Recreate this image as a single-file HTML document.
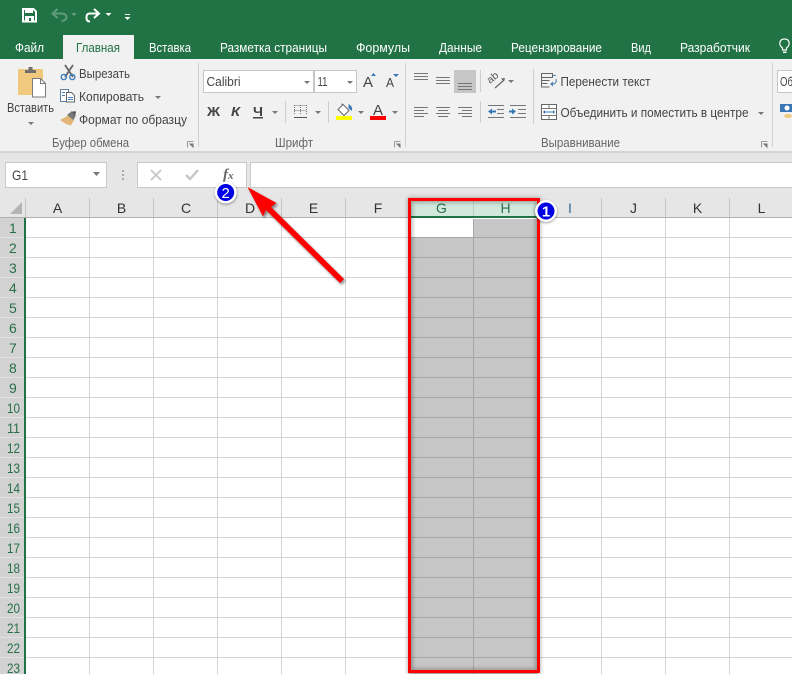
<!DOCTYPE html>
<html><head><meta charset="utf-8"><style>
html,body{margin:0;padding:0;background:#fff;overflow:hidden}
svg{display:block}
text{font-family:"Liberation Sans",sans-serif;font-size:12.5px;fill:#444}
.t{fill:#fff}
.g{fill:#666}
.c{font-size:14px;fill:#333;text-anchor:middle}
.r{font-size:14px;fill:#27704a}
.l{fill:none;stroke:#767676}
</style></head><body>
<svg width="792" height="674" viewBox="0 0 792 674" xmlns="http://www.w3.org/2000/svg">
<defs>
<filter id="b" x="-20%" y="-20%" width="140%" height="140%"><feGaussianBlur stdDeviation="2"/></filter>
<filter id="b2" x="-30%" y="-30%" width="160%" height="160%"><feGaussianBlur stdDeviation="1.2"/></filter>
</defs>

<!-- title bar -->
<rect width="792" height="59" fill="#217346"/>
<rect x="63" y="35" width="71" height="24" fill="#f1f1f1"/>
<!-- save -->
<path d="M23 9h10.500l2.500 2.500v10h-13z" fill="none" stroke="#fff" stroke-width="2"/>
<rect x="25" y="8" width="8" height="5" fill="#fff"/>
<rect x="25" y="16" width="9" height="5" fill="#fff"/>
<rect x="29" y="18" width="2" height="3" fill="#217346"/>
<!-- undo -->
<path d="M53 13.500h9c3.500 0 4.500 2.500 4.500 4s-2 3.500-5 3.500" fill="none" stroke="#5f9c7c" stroke-width="2"/>
<path d="M57.500 9l-5 4.500 5 4.500" fill="none" stroke="#5f9c7c" stroke-width="2"/>
<path d="M71 13h6l-3 3z" fill="#5f9c7c"/>
<!-- redo -->
<path d="M98 13.500h-8c-3.500 0-3.500 2.500-3.500 4.500s1 3.500 3.500 3.500" fill="none" stroke="#fff" stroke-width="2"/>
<path d="M94 9l5 4.500-5 4.500" fill="none" stroke="#fff" stroke-width="2"/>
<path d="M105.500 13h6l-3 3z" fill="#fff"/>
<rect x="125" y="14" width="5" height="1" fill="#fff"/>
<path d="M124.500 17h6l-3 3z" fill="#fff"/>

<!-- tabs -->
<text class="t" x="15" y="52" textLength="29" lengthAdjust="spacingAndGlyphs">Файл</text>
<text x="76" y="52" textLength="44" lengthAdjust="spacingAndGlyphs" style="fill:#217346">Главная</text>
<text class="t" x="149" y="52" textLength="42" lengthAdjust="spacingAndGlyphs">Вставка</text>
<text class="t" x="220" y="52" textLength="107" lengthAdjust="spacingAndGlyphs">Разметка страницы</text>
<text class="t" x="356" y="52" textLength="54" lengthAdjust="spacingAndGlyphs">Формулы</text>
<text class="t" x="439" y="52" textLength="43" lengthAdjust="spacingAndGlyphs">Данные</text>
<text class="t" x="511" y="52" textLength="91" lengthAdjust="spacingAndGlyphs">Рецензирование</text>
<text class="t" x="631" y="52" textLength="20" lengthAdjust="spacingAndGlyphs">Вид</text>
<text class="t" x="680" y="52" textLength="70" lengthAdjust="spacingAndGlyphs">Разработчик</text>
<path d="M782.500 50v-2c-4.500-3.500-3-9 2-9s6.500 5.500 2 9v2z" fill="none" stroke="#fff" stroke-width="1.200"/>
<rect x="783" y="51.500" width="3.500" height="1.500" fill="#fff"/>

<!-- ribbon -->
<rect y="59" width="792" height="92" fill="#f1f1f1"/>
<rect y="151" width="792" height="2" fill="#d4d4d4"/>
<rect x="198" y="63" width="1" height="84" fill="#d0d0d0"/>
<rect x="405" y="63" width="1" height="84" fill="#d0d0d0"/>
<rect x="772" y="63" width="1" height="84" fill="#d0d0d0"/>

<!-- paste -->
<rect x="18" y="69" width="25" height="26" rx="1" fill="#f0c97f"/>
<path d="M25 73v-3h3.500v-3h4v3h3.500v3z" fill="#6f6f6f"/>
<path d="M32.500 78.500h8l5 5v13.500h-13z" fill="#fff" stroke="#7a7a7a"/>
<path d="M40.500 78.500v5h5" fill="none" stroke="#7a7a7a"/>
<text x="7" y="112" textLength="47" lengthAdjust="spacingAndGlyphs">Вставить</text>
<path d="M28 122h6l-3 3z" fill="#777"/>
<!-- scissors -->
<path d="M65 65l8 12M73 65l-8 12" stroke="#666" stroke-width="1.800" fill="none"/>
<circle cx="63.800" cy="77" r="2.600" fill="none" stroke="#3f7fbf" stroke-width="1.400"/>
<circle cx="72.300" cy="77" r="2.600" fill="none" stroke="#3f7fbf" stroke-width="1.400"/>
<text x="79" y="78" textLength="51" lengthAdjust="spacingAndGlyphs">Вырезать</text>
<!-- copy -->
<path d="M60.500 89.500h8v12h-8z" fill="#fff" stroke="#5f7f9f"/>
<path d="M66.500 92.500h5l3 3v6.500h-8z" fill="#fff" stroke="#666"/>
<path d="M62 92.500h3M62 95.500h3M68 97.500h5M68 99.500h5" stroke="#4a7fb5" fill="none"/>
<text x="79" y="101" textLength="65" lengthAdjust="spacingAndGlyphs">Копировать</text>
<path d="M155 96h6l-3 3z" fill="#777"/>
<!-- brush -->
<path d="M60 120l9-5 5 5-3 5.500-5-1.500z" fill="#e2b478"/>
<path d="M67 115l5-4 4 4-2.500 5z" fill="#777"/>
<path d="M72 112l3-1 1 1-1 3z" fill="#555"/>
<text x="79" y="124" textLength="108" lengthAdjust="spacingAndGlyphs">Формат по образцу</text>
<text class="g" x="52" y="147" textLength="77" lengthAdjust="spacingAndGlyphs">Буфер обмена</text>
<path d="M187.500 141.500h6M187.500 141.500v6" stroke="#999" fill="none"/><path d="M190 144l3 3v-3z" fill="#777" stroke="#777"/>

<!-- font -->
<rect x="203.500" y="70.500" width="110" height="22" fill="#fff" stroke="#c6c6c6"/>
<rect x="314.500" y="70.500" width="42" height="22" fill="#fff" stroke="#c6c6c6"/>
<text x="206.500" y="86" textLength="34" lengthAdjust="spacingAndGlyphs">Calibri</text>
<text x="317.500" y="86" textLength="10" lengthAdjust="spacingAndGlyphs">11</text>
<path d="M304 81h6l-3 3zM347 81h6l-3 3z" fill="#777"/>
<text x="363" y="87" style="font-size:15px" textLength="10" lengthAdjust="spacingAndGlyphs">A</text>
<path d="M371 76l2.500-3 2.500 3z" fill="#3a76b5"/>
<text x="386" y="87" style="font-size:13px" textLength="8" lengthAdjust="spacingAndGlyphs">A</text>
<path d="M393 74h6l-3 3z" fill="#3a76b5"/>
<text x="207" y="116" style="font-weight:bold;font-size:13px" textLength="13" lengthAdjust="spacingAndGlyphs">Ж</text>
<text x="231" y="116" style="font-weight:bold;font-style:italic;font-size:13px" textLength="9" lengthAdjust="spacingAndGlyphs">К</text>
<text x="253" y="116" style="font-weight:bold;font-size:13px" textLength="10" lengthAdjust="spacingAndGlyphs">Ч</text>
<rect x="253" y="117" width="10" height="1.500" fill="#444"/>
<path d="M272 111h6l-3 3z" fill="#777"/>
<rect x="285" y="101" width="1" height="22" fill="#cdcdcd"/>
<path d="M294.500 105.500h12M294.500 110.500h12M294.500 105v10M300.500 105v10M306.500 105v10" stroke="#777" stroke-dasharray="1 1" fill="none"/>
<rect x="294" y="117" width="13" height="1" fill="#555"/>
<path d="M315 111h6l-3 3z" fill="#777"/>
<rect x="328" y="101" width="1" height="22" fill="#cdcdcd"/>
<path d="M338 109.500l5-5 6 6-5 5z" fill="#fff" stroke="#666"/>
<path d="M342 105v-1.500M349 105c2 1 3 3 2.500 5l-2.500-2z" fill="#3a76b5" stroke="#3a76b5"/>
<rect x="336" y="116" width="16" height="4" fill="#ffff00"/>
<path d="M358 111h6l-3 3z" fill="#777"/>
<text x="373" y="115" style="font-size:15px" textLength="10" lengthAdjust="spacingAndGlyphs">A</text>
<rect x="370" y="116" width="16" height="4" fill="#ff0000"/>
<path d="M392 111h6l-3 3z" fill="#777"/>
<text class="g" x="275" y="147" textLength="38" lengthAdjust="spacingAndGlyphs">Шрифт</text>
<path d="M394.500 141.500h6M394.500 141.500v6" stroke="#999" fill="none"/><path d="M397 144l3 3v-3z" fill="#777" stroke="#777"/>

<!-- alignment -->
<path class="l" d="M414 73.500h14M414 76.500h14M414 79.500h14"/>
<path class="l" d="M436 77.500h14M436 80.500h14M436 83.500h14"/>
<rect x="454" y="70" width="22" height="23" fill="#c6c6c6"/>
<path class="l" d="M458 83.500h14M458 86.500h14M458 89.500h14"/>
<rect x="480" y="70" width="1" height="22" fill="#cdcdcd"/>
<text x="490" y="84" transform="rotate(-40 490 84)" style="font-size:10px;fill:#555" textLength="12" lengthAdjust="spacingAndGlyphs">ab</text>
<path d="M495 88l9-8" stroke="#666" stroke-width="1.200" fill="none"/>
<path d="M505 78l-4 .5 3 3z" fill="#666"/>
<path d="M508 80h6l-3 3z" fill="#777"/>
<path class="l" d="M414 107.500h14M414 110.500h10M414 113.500h14M414 116.500h10"/>
<path class="l" d="M436 107.500h14M438 110.500h10M436 113.500h14M438 116.500h10"/>
<path class="l" d="M458 107.500h14M462 110.500h10M458 113.500h14M462 116.500h10"/>
<rect x="480" y="101" width="1" height="22" fill="#cdcdcd"/>
<path class="l" d="M488 105.500h16M497 109.500h7M497 113.500h7M488 117.500h16"/>
<path d="M488 111.500l4-3v2h4v2h-4v2z" fill="#3a76b5"/>
<path class="l" d="M510 105.500h16M518 109.500h8M518 113.500h8M510 117.500h16"/>
<path d="M516 111.500l-4-3v2h-3v2h3v2z" fill="#3a76b5"/>
<rect x="533" y="69" width="1" height="55" fill="#cdcdcd"/>
<!-- wrap text -->
<path d="M541.500 73.500h11v4h-11zM541.500 77.500v9.500h8M541.500 80.500h8M541.500 83.500h6" fill="none" stroke="#666"/>
<path d="M553 75.500h3M556 79c1 3-1 5-3 5" stroke="#4a7fb5" fill="none"/>
<path d="M550 84l3-2.500v5z" fill="#4a7fb5"/>
<text x="560.500" y="86" textLength="90" lengthAdjust="spacingAndGlyphs">Перенести текст</text>
<!-- merge -->
<rect x="541.500" y="104.500" width="15" height="15" fill="#fff" stroke="#666"/>
<path d="M541.500 108.500h15M541.500 115.500h15M549 104v4M549 116v4" stroke="#777" fill="none"/>
<path d="M544 112h10" stroke="#3a76b5" fill="none"/>
<path d="M543 112l2-2v4zM555 112l-2-2v4z" fill="#3a76b5"/>
<text x="560.500" y="117" textLength="188" lengthAdjust="spacingAndGlyphs">Объединить и поместить в центре</text>
<path d="M758 112h6l-3 3z" fill="#777"/>
<text class="g" x="541" y="147" textLength="79" lengthAdjust="spacingAndGlyphs">Выравнивание</text>
<path d="M761.500 141.500h6M761.500 141.500v6" stroke="#999" fill="none"/><path d="M764 144l3 3v-3z" fill="#777" stroke="#777"/>
<!-- right edge -->
<rect x="777.500" y="70.500" width="20" height="22" fill="#fff" stroke="#c6c6c6"/>
<text x="780" y="86" textLength="13" lengthAdjust="spacingAndGlyphs">Об</text>
<rect x="780" y="104" width="12" height="8" fill="#3a76b5"/>
<circle cx="787" cy="108" r="2.500" fill="#fff"/>
<ellipse cx="788" cy="116" rx="4" ry="2" fill="#f0c97f"/>

<!-- formula bar -->
<rect y="153" width="792" height="45" fill="#e6e6e6"/>
<rect x="5.500" y="162.500" width="101" height="25" fill="#fff" stroke="#c8c8c8"/>
<text x="12" y="180" style="font-size:14px" textLength="16" lengthAdjust="spacingAndGlyphs">G1</text>
<path d="M93 172h7l-3.500 4z" fill="#777"/>
<path d="M122 170h2v2h-2zM122 174h2v2h-2zM122 178h2v2h-2z" fill="#aaa"/>
<rect x="137.500" y="162.500" width="109" height="25" fill="#fff" stroke="#c8c8c8"/>
<path d="M151 170l10 10M161 170l-10 10" stroke="#c6c6c6" stroke-width="1.800" fill="none"/>
<path d="M186 175l4 4 8-9" stroke="#c6c6c6" stroke-width="2.400" fill="none"/>
<text x="223" y="179" style="font-family:'Liberation Serif',serif;font-style:italic;font-weight:bold;font-size:15px;fill:#666">f<tspan style="font-family:'Liberation Serif',serif;font-size:11px;fill:#666">x</tspan></text>
<rect x="250.500" y="162.500" width="545" height="25" fill="#fff" stroke="#c8c8c8"/>

<!-- headers -->
<rect y="198" width="792" height="20" fill="#e6e6e6"/>
<path d="M22 202v12h-12z" fill="#b4b4b4"/>
<rect x="409" y="198" width="128" height="19" fill="#d2e8dc"/>
<path d="M25.500 198v19M89.500 198v19M153.500 198v19M217.500 198v19M281.500 198v19M345.500 198v19M409.500 198v19M537.500 198v19M601.500 198v19M665.500 198v19M729.500 198v19" stroke="#c6c6c6" fill="none"/>
<path d="M473.500 198v19" stroke="#b5cfc2" fill="none"/>
<rect x="0" y="217" width="792" height="1" fill="#b0b0b0"/>
<rect x="409" y="216" width="128" height="2" fill="#217346"/>
<text class="c" x="57.500" y="213">A</text>
<text class="c" x="121.500" y="213">B</text>
<text class="c" x="186" y="213">C</text>
<text class="c" x="250" y="213">D</text>
<text class="c" x="313.500" y="213">E</text>
<text class="c" x="378" y="213">F</text>
<text class="c" x="441.500" y="213" style="fill:#27704a">G</text>
<text class="c" x="505.500" y="213" style="fill:#27704a">H</text>
<text class="c" x="570" y="213" style="fill:#2f6a9a">I</text>
<text class="c" x="633.500" y="213">J</text>
<text class="c" x="697.500" y="213">K</text>
<text class="c" x="761.500" y="213">L</text>

<!-- row header -->
<rect x="0" y="218" width="24" height="456" fill="#d2d2d2"/>
<rect x="24" y="218" width="2" height="456" fill="#217346"/>
<path d="M0 237.500h24M0 257.500h24M0 277.500h24M0 297.500h24M0 317.500h24M0 337.500h24M0 357.500h24M0 377.500h24M0 397.500h24M0 417.500h24M0 437.500h24M0 457.500h24M0 477.500h24M0 497.500h24M0 517.500h24M0 537.500h24M0 557.500h24M0 577.500h24M0 597.500h24M0 617.500h24M0 637.500h24M0 657.500h24" stroke="#e2e2e2" fill="none"/>
<text class="r" x="9" y="233">1</text>
<text class="r" x="9" y="253">2</text>
<text class="r" x="9" y="273">3</text>
<text class="r" x="9" y="293">4</text>
<text class="r" x="9" y="313">5</text>
<text class="r" x="9" y="333">6</text>
<text class="r" x="9" y="353">7</text>
<text class="r" x="9" y="373">8</text>
<text class="r" x="9" y="393">9</text>
<text class="r" x="7" y="413" textLength="13" lengthAdjust="spacingAndGlyphs">10</text>
<text class="r" x="7" y="433" textLength="13" lengthAdjust="spacingAndGlyphs">11</text>
<text class="r" x="7" y="453" textLength="13" lengthAdjust="spacingAndGlyphs">12</text>
<text class="r" x="7" y="473" textLength="13" lengthAdjust="spacingAndGlyphs">13</text>
<text class="r" x="7" y="493" textLength="13" lengthAdjust="spacingAndGlyphs">14</text>
<text class="r" x="7" y="513" textLength="13" lengthAdjust="spacingAndGlyphs">15</text>
<text class="r" x="7" y="533" textLength="13" lengthAdjust="spacingAndGlyphs">16</text>
<text class="r" x="7" y="553" textLength="13" lengthAdjust="spacingAndGlyphs">17</text>
<text class="r" x="7" y="573" textLength="13" lengthAdjust="spacingAndGlyphs">18</text>
<text class="r" x="7" y="593" textLength="13" lengthAdjust="spacingAndGlyphs">19</text>
<text class="r" x="7" y="613" textLength="13" lengthAdjust="spacingAndGlyphs">20</text>
<text class="r" x="7" y="633" textLength="13" lengthAdjust="spacingAndGlyphs">21</text>
<text class="r" x="7" y="653" textLength="13" lengthAdjust="spacingAndGlyphs">22</text>
<text class="r" x="7" y="673" textLength="13" lengthAdjust="spacingAndGlyphs">23</text>

<!-- grid -->
<path d="M89.500 218v456M153.500 218v456M217.500 218v456M281.500 218v456M345.500 218v456M409.500 218v456M537.500 218v456M601.500 218v456M665.500 218v456M729.500 218v456" stroke="#d4d4d4" fill="none"/>
<path d="M26 237.500h766M26 257.500h766M26 277.500h766M26 297.500h766M26 317.500h766M26 337.500h766M26 357.500h766M26 377.500h766M26 397.500h766M26 417.500h766M26 437.500h766M26 457.500h766M26 477.500h766M26 497.500h766M26 517.500h766M26 537.500h766M26 557.500h766M26 577.500h766M26 597.500h766M26 617.500h766M26 637.500h766M26 657.500h766" stroke="#d4d4d4" fill="none"/>

<!-- selection -->
<rect x="410" y="218" width="127" height="456" fill="#c6c6c6"/>
<rect x="410" y="218" width="63" height="19" fill="#fff"/>
<rect x="473" y="218" width="63" height="1" fill="#fff"/>
<path d="M473.500 219v455" stroke="#a6a6a6" fill="none"/>
<path d="M410 237.500h127M410 257.500h127M410 277.500h127M410 297.500h127M410 317.500h127M410 337.500h127M410 357.500h127M410 377.500h127M410 397.500h127M410 417.500h127M410 437.500h127M410 457.500h127M410 477.500h127M410 497.500h127M410 517.500h127M410 537.500h127M410 557.500h127M410 577.500h127M410 597.500h127M410 617.500h127M410 637.500h127M410 657.500h127" stroke="#a6a6a6" fill="none"/>

<!-- red frame -->
<rect x="410" y="200" width="128" height="471.500" fill="none" stroke="#000" stroke-width="5" opacity=".3" filter="url(#b)"/>
<rect x="409.500" y="199.500" width="129" height="472" fill="none" stroke="#ff0000" stroke-width="3"/>

<!-- arrow -->
<path d="M247.500 187l29 16-5.500 4 73 72-4 4-74-73-3 6.500z" fill="#000" opacity=".45" filter="url(#b2)" transform="translate(1.500 2)"/>
<path d="M247.500 187l29 16-5.500 4 73 72-4 4-74-73-3 6.500z" fill="#ff0000"/>

<!-- badges -->
<circle cx="226" cy="193.500" r="11" fill="#000" opacity=".4" filter="url(#b2)"/>
<circle cx="225.700" cy="192.500" r="11" fill="#fff"/>
<circle cx="225.700" cy="192.500" r="8.500" fill="#0000e6"/>
<text x="225.700" y="198" text-anchor="middle" style="font-size:15px;fill:#fff">2</text>
<circle cx="546" cy="212" r="11" fill="#000" opacity=".4" filter="url(#b2)"/>
<circle cx="546" cy="211" r="11" fill="#fff"/>
<circle cx="546" cy="211" r="8.500" fill="#0000e6"/>
<text x="546" y="216.500" text-anchor="middle" style="font-size:15px;font-weight:bold;fill:#fff">1</text>
</svg>
</body></html>
